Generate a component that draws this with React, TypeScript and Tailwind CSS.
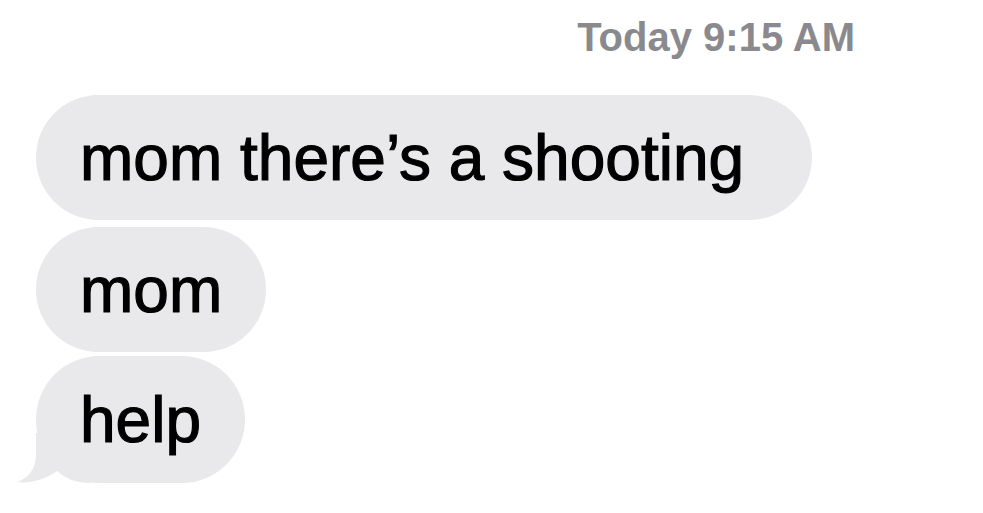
const Bubble = (props: any) => {
  return (
    <div
      className={`relative flex items-center rounded-full bg-[#e9e9eb] pl-[44px] text-[64px] leading-none text-black ${props.className}`}
    >
      {props.tail && (
        <svg
          className="absolute -left-[19px] bottom-0"
          width="75"
          height="50"
          viewBox="0 0 75 50"
        >
          <path
            d="M19 0 L19 20 C19 36 12 45 0 49 C14 51 29 46 40 38 C48 45 58 50 73 50 L73 0 Z"
            fill="#e9e9eb"
          />
        </svg>
      )}
      <span className="relative whitespace-nowrap [-webkit-text-stroke:1.2px_black]">
        {props.text}
      </span>
    </div>
  );
};

export default function App() {
  return (
    <div className="h-[513px] w-[983px] overflow-hidden bg-white font-['Liberation_Sans',Arial,sans-serif]">
      <div className="flex justify-end pr-[128px] pt-[14px]">
        <p className="text-[40px] leading-[46px] font-bold text-[#8a8a8e]">Today 9:15 AM</p>
      </div>
      <div className="mt-[35px] flex flex-col items-start pl-[36px]">
        <Bubble className="h-[125px] pr-[68px]" text="mom there’s a shooting" />
        <Bubble className="mt-[7px] h-[125px] pr-[44px]" text="mom" />
        <Bubble className="mt-[4px] h-[127px] pr-[44px]" text="help" tail />
      </div>
    </div>
  );
}
